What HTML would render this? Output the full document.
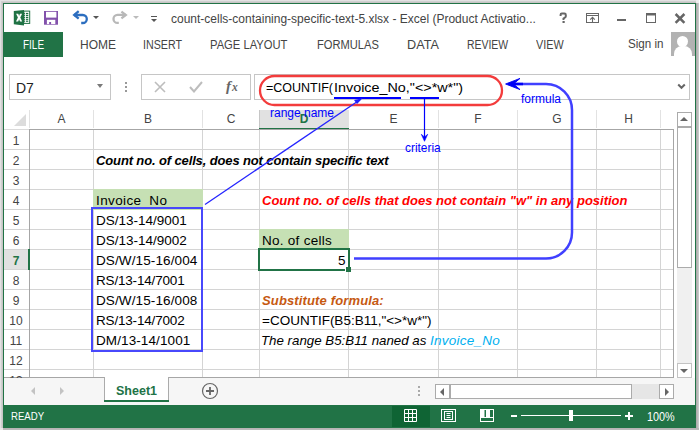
<!DOCTYPE html>
<html><head><meta charset="utf-8">
<style>
*{margin:0;padding:0;box-sizing:border-box}
html,body{width:699px;height:430px;overflow:hidden;background:#fff;font-family:"Liberation Sans",sans-serif}
.a{position:absolute;white-space:nowrap}
#win{position:absolute;left:3px;top:3px;width:693px;height:425px;border:1px solid #217346;background:#fff;box-shadow:none}
.tab{position:absolute;top:39px;font-size:12px;color:#444;line-height:13px;transform-origin:0 0;white-space:nowrap}
.vl{position:absolute;width:1px;background:#d4d4d4}
.hl{position:absolute;height:1px;background:#d4d4d4}
.ch{position:absolute;top:110px;height:18px;font-size:12px;color:#444;text-align:center;line-height:18px}
.rh{position:absolute;left:4px;width:24px;font-size:12px;color:#444;text-align:center;line-height:20px;height:19px;padding-top:1px;overflow:visible}
.c{position:absolute;font-size:13.5px;color:#000;line-height:22px;height:22px;white-space:nowrap}
</style></head><body>
<div class="a" style="left:0;top:0;width:699px;height:1px;background:#e2e2e2"></div>
<div class="a" style="left:0;top:1px;width:699px;height:1px;background:#d0d0d0"></div>
<div class="a" style="left:0;top:2px;width:699px;height:1px;background:#c7c5c5"></div>
<div class="a" style="left:0;top:0;width:1px;height:430px;background:#e2e2e2"></div>
<div class="a" style="left:1px;top:1px;width:1px;height:429px;background:#d0d0d0"></div>
<div class="a" style="left:2px;top:2px;width:1px;height:428px;background:#c7c5c5"></div>
<div class="a" style="left:696px;top:3px;width:1px;height:427px;background:#b0aeae"></div>
<div class="a" style="left:697px;top:3px;width:1px;height:427px;background:#b9b9b9"></div>
<div class="a" style="left:698px;top:3px;width:1px;height:427px;background:#c9c9c9"></div>
<div class="a" style="left:3px;top:428px;width:696px;height:1px;background:#b7b5b5"></div>
<div class="a" style="left:3px;top:429px;width:696px;height:1px;background:#bababa"></div>
<div class="a" style="left:696px;top:0;width:3px;height:3px;background:#eeeeee"></div>
<div class="a" style="left:0;top:428px;width:3px;height:2px;background:#e8e8e8"></div>
<div id="win"></div>

<!-- ===== Title bar ===== -->
<svg class="a" style="left:13px;top:9px" width="19" height="18" viewBox="0 0 19 18">
  <rect x="10.8" y="2.1" width="5.9" height="12.3" fill="#fff" stroke="#1f7244" stroke-width="1"/>
  <g fill="#1f7244"><rect x="12.9" y="3.9" width="2.4" height="1.2"/><rect x="12.9" y="5.8" width="2.4" height="1.2"/><rect x="12.9" y="7.8" width="2.4" height="1.2"/><rect x="12.9" y="9.7" width="2.4" height="1.2"/><rect x="12.9" y="11.6" width="2.4" height="1.2"/>
  <rect x="11" y="3.9" width="0.9" height="1.2"/><rect x="11" y="5.8" width="0.9" height="1.2"/><rect x="11" y="7.8" width="0.9" height="1.2"/><rect x="11" y="9.7" width="0.9" height="1.2"/><rect x="11" y="11.6" width="0.9" height="1.2"/></g>
  <path d="M0.8 2.1 L11 0.9 L11 16.6 L0.8 15.3 Z" fill="#1f7244"/>
  <path d="M3.1 4.7 H5.3 L6.1 6.9 L6.9 4.7 H9.1 L7.3 8.6 L9.2 12.6 H7 L6.1 10.3 L5.2 12.6 H3 L4.9 8.6 Z" fill="#fff"/>
</svg>
<svg class="a" style="left:44px;top:10px" width="14" height="15" viewBox="0 0 14 15">
  <rect x="0" y="1" width="14" height="13.7" fill="#8251ab"/>
  <rect x="2" y="1.8" width="10.4" height="5.8" fill="#fff"/>
  <rect x="2.9" y="9.8" width="8.4" height="4.3" fill="#fff"/>
  <rect x="5.2" y="12" width="1.9" height="2.2" fill="#8251ab"/>
</svg>
<svg class="a" style="left:68px;top:6px" width="24" height="22" viewBox="0 0 24 22">
  <path d="M10.7 5.2 L6.2 9 L10.7 12.6" fill="none" stroke="#2c6ebf" stroke-width="2.3" stroke-linejoin="miter"/>
  <path d="M6 9 H14.8 A4 4 0 0 1 14.8 17 H13.2" fill="none" stroke="#2c6ebf" stroke-width="2.3"/>
</svg>
<div class="a" style="left:93px;top:16px;width:0;height:0;border-left:3px solid transparent;border-right:3px solid transparent;border-top:3px solid #555"></div>
<svg class="a" style="left:108px;top:6px" width="24" height="22" viewBox="0 0 24 22">
  <path d="M13.4 5.6 L17.8 8.9 L13.4 12.3" fill="none" stroke="#b8b8b8" stroke-width="2.3"/>
  <path d="M18 8.9 H9.5 A4 4 0 0 0 9.5 16.9 H10.8" fill="none" stroke="#b8b8b8" stroke-width="2.3"/>
</svg>
<div class="a" style="left:133px;top:16px;width:0;height:0;border-left:3px solid transparent;border-right:3px solid transparent;border-top:3px solid #bbb"></div>
<div class="a" style="left:151px;top:16px;width:6px;height:1px;background:#555"></div>
<div class="a" style="left:151px;top:19px;width:0;height:0;border-left:3px solid transparent;border-right:3px solid transparent;border-top:3px solid #555"></div>
<div class="a" style="left:171px;top:12px;font-size:12px;color:#444;line-height:14px">count-cells-containing-specific-text-5.xlsx - Excel (Product Activatio...</div>

<!-- window controls -->
<svg class="a" style="left:559px;top:12px" width="9" height="12" viewBox="0 0 9 12">
  <path d="M1.6 4 V2.8 Q1.6 1.6 2.8 1.6 H5.4 Q6.8 1.6 6.8 3 V4.2 Q6.8 5 6 5.5 L4.5 6.6 V8" fill="none" stroke="#666" stroke-width="2"/>
  <rect x="3.5" y="9" width="2.2" height="2" fill="#666"/>
</svg>
<svg class="a" style="left:585px;top:12px" width="15" height="12" viewBox="0 0 15 12">
  <rect x="1.5" y="1.5" width="12" height="9" fill="none" stroke="#666" stroke-width="1"/>
  <path d="M1.5 3.5 H13.5" stroke="#666" stroke-width="1"/>
  <path d="M5.2 7.6 L7.5 5.4 L9.8 7.6" fill="none" stroke="#666" stroke-width="1.2"/>
  <path d="M7.5 5.8 V10.5" stroke="#666" stroke-width="1.1"/>
</svg>
<div class="a" style="left:617px;top:19px;width:9px;height:2px;background:#666"></div>
<svg class="a" style="left:646px;top:13px" width="11" height="10" viewBox="0 0 11 10">
  <rect x="0.5" y="0.5" width="9" height="9" fill="none" stroke="#666"/>
  <rect x="0" y="0" width="10" height="2.5" fill="#666"/>
</svg>
<svg class="a" style="left:674px;top:13px" width="12" height="11" viewBox="0 0 12 11">
  <path d="M1.6 1 L10.4 9.8 M10.4 1 L1.6 9.8" stroke="#666" stroke-width="2.5"/>
</svg>

<!-- ===== Ribbon tabs ===== -->
<div class="a" style="left:3px;top:32px;width:60px;height:25px;background:#217346"></div>
<div class="tab" style="left:23px;color:#fff;transform:scaleX(0.83)">FILE</div>
<div class="tab" style="left:80px;transform:scaleX(1.0)">HOME</div>
<div class="tab" style="left:143px;transform:scaleX(0.891)">INSERT</div>
<div class="tab" style="left:210px;transform:scaleX(0.934)">PAGE LAYOUT</div>
<div class="tab" style="left:317px;transform:scaleX(0.928)">FORMULAS</div>
<div class="tab" style="left:407px;transform:scaleX(1.054)">DATA</div>
<div class="tab" style="left:467px;transform:scaleX(0.869)">REVIEW</div>
<div class="tab" style="left:536px;transform:scaleX(0.90)">VIEW</div>
<div class="tab" style="left:628px;font-size:12.5px;top:38px;transform:scaleX(0.93)">Sign in</div>
<div class="a" style="left:671px;top:32px;width:24px;height:24px;background:#b2b2b2;overflow:hidden">
  <div class="a" style="left:6px;top:4px;width:11px;height:11px;border-radius:50%;background:#fff"></div>
  <div class="a" style="left:3px;top:14px;width:18px;height:14px;border-radius:8px 8px 0 0;background:#fff"></div>
</div>

<!-- ===== Formula bar ===== -->
<div class="a" style="left:9px;top:74px;width:102px;height:26px;border:1px solid #c6c6c6;background:#fff"></div>
<div class="a" style="left:16px;top:80px;font-size:14px;color:#222;line-height:16px">D7</div>
<div class="a" style="left:97px;top:84px;width:0;height:0;border-left:3.5px solid transparent;border-right:3.5px solid transparent;border-top:4px solid #7a7a7a"></div>
<div class="a" style="left:125px;top:82px;width:2px;height:2px;background:#999"></div>
<div class="a" style="left:125px;top:86px;width:2px;height:2px;background:#999"></div>
<div class="a" style="left:125px;top:90px;width:2px;height:2px;background:#999"></div>
<div class="a" style="left:141px;top:74px;width:110px;height:26px;border:1px solid #c6c6c6;background:#fff"></div>
<svg class="a" style="left:154px;top:81px" width="12" height="12" viewBox="0 0 12 12"><path d="M1 1 L11 11 M11 1 L1 11" stroke="#bdbdbd" stroke-width="1.6"/></svg>
<svg class="a" style="left:189px;top:81px" width="14" height="12" viewBox="0 0 14 12"><path d="M1 6 L5 10.5 L13 1" fill="none" stroke="#bdbdbd" stroke-width="2"/></svg>
<div class="a" style="left:226px;top:78px;font-family:'Liberation Serif';font-style:italic;font-weight:bold;font-size:15px;color:#666;line-height:16px">f<span style="font-size:11.5px;margin-left:1px">x</span></div>
<div class="a" style="left:254px;top:74px;width:436px;height:26px;border:1px solid #c6c6c6;background:#fff"></div>
<svg class="a" style="left:677px;top:83px" width="9" height="7" viewBox="0 0 9 7"><path d="M1.2 1.5 L4.5 4.8 L7.8 1.5" fill="none" stroke="#666" stroke-width="2"/></svg>
<div class="a" style="left:266px;top:79px;font-size:13px;color:#000;line-height:17px;transform:scaleX(0.961);transform-origin:0 0">=COUNTIF(</div>
<div class="a" style="left:333.5px;top:79px;font-size:13px;color:#000;line-height:17px;transform:scaleX(1.104);transform-origin:0 0">Invoice_No,"&lt;&gt;*w*")</div>

<!-- ===== Grid ===== -->
<!-- header row -->
<div class="a" style="left:259px;top:110px;width:89px;height:18px;background:#e1e1e1"></div>
<div class="a" style="left:259px;top:128px;width:90px;height:2px;background:#217346"></div>
<svg class="a" style="left:14px;top:114px" width="12" height="12"><path d="M12 0 L12 12 L0 12 Z" fill="#dcdcdc"/></svg>
<div class="ch" style="left:30px;width:63px">A</div>
<div class="ch" style="left:94px;width:108px">B</div>
<div class="ch" style="left:203px;width:56px">C</div>
<div class="ch" style="left:260px;width:88px;color:#217346;font-weight:bold">D</div>
<div class="ch" style="left:349px;width:89px">E</div>
<div class="ch" style="left:439px;width:78px">F</div>
<div class="ch" style="left:518px;width:78px">G</div>
<div class="ch" style="left:597px;width:63px">H</div>
<!-- header separators -->
<div class="vl" style="left:29px;top:110px;height:18px;background:#e2e2e2"></div>
<div class="vl" style="left:93px;top:110px;height:18px;background:#e2e2e2"></div>
<div class="vl" style="left:202px;top:110px;height:18px;background:#e2e2e2"></div>
<div class="vl" style="left:259px;top:110px;height:18px;background:#c6c6c6"></div>
<div class="vl" style="left:348px;top:110px;height:18px;background:#e2e2e2"></div>
<div class="vl" style="left:438px;top:110px;height:18px;background:#e2e2e2"></div>
<div class="vl" style="left:517px;top:110px;height:18px;background:#e2e2e2"></div>
<div class="vl" style="left:596px;top:110px;height:18px;background:#e2e2e2"></div>
<div class="vl" style="left:660px;top:110px;height:18px;background:#e2e2e2"></div>
<div class="hl" style="left:29px;top:129px;width:645px;background:#a6a6a6"></div>
<div class="hl" style="left:4px;top:129px;width:25px;background:#dadada"></div>

<!-- grid lines -->
<div class="vl" style="left:93px;top:130px;height:247px"></div>
<div class="vl" style="left:202px;top:130px;height:247px"></div>
<div class="vl" style="left:259px;top:130px;height:247px"></div>
<div class="vl" style="left:348px;top:130px;height:247px"></div>
<div class="vl" style="left:438px;top:130px;height:247px"></div>
<div class="vl" style="left:517px;top:130px;height:247px"></div>
<div class="vl" style="left:596px;top:130px;height:247px"></div>
<div class="vl" style="left:660px;top:130px;height:247px"></div>
<div class="hl" style="left:4px;top:149px;width:669px"></div>
<div class="hl" style="left:4px;top:169px;width:669px"></div>
<div class="hl" style="left:4px;top:189px;width:669px"></div>
<div class="hl" style="left:4px;top:209px;width:669px"></div>
<div class="hl" style="left:4px;top:229px;width:669px"></div>
<div class="hl" style="left:4px;top:249px;width:669px"></div>
<div class="hl" style="left:4px;top:269px;width:669px"></div>
<div class="hl" style="left:4px;top:289px;width:669px"></div>
<div class="hl" style="left:4px;top:309px;width:669px"></div>
<div class="hl" style="left:4px;top:329px;width:669px"></div>
<div class="hl" style="left:4px;top:349px;width:669px"></div>
<div class="hl" style="left:4px;top:369px;width:669px"></div>

<div class="vl" style="left:29px;top:129px;height:248px;background:#a6a6a6"></div>
<div class="vl" style="left:673px;top:129px;height:248px;background:#a6a6a6"></div>
<div class="hl" style="left:4px;top:377px;width:670px;background:#a6a6a6"></div>

<!-- row headers -->
<div class="rh" style="top:130px">1</div>
<div class="rh" style="top:150px">2</div>
<div class="rh" style="top:170px">3</div>
<div class="rh" style="top:190px">4</div>
<div class="rh" style="top:210px">5</div>
<div class="rh" style="top:230px">6</div>
<div class="rh" style="top:250px;background:#e1e1e1;color:#217346;font-weight:bold">7</div>
<div class="a" style="left:28px;top:249px;width:2px;height:21px;background:#217346"></div>
<div class="rh" style="top:270px">8</div>
<div class="rh" style="top:290px">9</div>
<div class="rh" style="top:310px">10</div>
<div class="rh" style="top:330px">11</div>
<div class="rh" style="top:350px">12</div>
<div class="rh" style="top:370px">13</div>

<!-- cell fills -->
<div class="a" style="left:93px;top:189px;width:110px;height:21px;background:#c6e0b4"></div>
<div class="a" style="left:259px;top:229px;width:90px;height:20px;background:#c6e0b4"></div>

<!-- cells -->
<div class="c" style="left:96px;top:150px;font-weight:bold;font-style:italic;font-size:13px;letter-spacing:-0.13px">Count no. of cells, does not contain specific text</div>
<div class="c" style="left:96px;top:190px;letter-spacing:0.38px">Invoice_No</div>
<div class="c" style="left:96px;top:210px">DS/13-14/9001</div>
<div class="c" style="left:96px;top:230px">DS/13-14/9002</div>
<div class="c" style="left:96px;top:250px;letter-spacing:0.12px">DS/W/15-16/004</div>
<div class="c" style="left:96px;top:270px;letter-spacing:-0.18px">RS/13-14/7001</div>
<div class="c" style="left:96px;top:290px;letter-spacing:0.12px">DS/W/15-16/008</div>
<div class="c" style="left:96px;top:310px;letter-spacing:-0.18px">RS/13-14/7002</div>
<div class="c" style="left:96px;top:330px;letter-spacing:0.1px">DM/13-14/1001</div>
<div class="c" style="left:262px;top:190px;font-weight:bold;font-style:italic;color:#f00;font-size:13px">Count no. of cells that does not contain "w" in any position</div>
<div class="c" style="left:262px;top:230px;letter-spacing:0.27px">No. of cells</div>
<div class="c" style="left:338px;top:250px">5</div>
<div class="c" style="left:262px;top:290px;font-weight:bold;font-style:italic;color:#c65911;font-size:13px;letter-spacing:0.14px">Substitute formula:</div>
<div class="c" style="left:262px;top:310px">=COUNTIF(B5:B11,"&lt;&gt;*w*")</div>
<div class="c" style="left:261px;top:330px;font-style:italic;font-size:13.3px">The range B5:B11 naned as</div>
<div class="c" style="left:430px;top:330px;font-style:italic;color:#00b0f0;font-size:13.5px;letter-spacing:0.25px">Invoice_No</div>

<!-- active cell -->
<div class="a" style="left:258px;top:248px;width:92px;height:23px;border:2px solid #217346"></div>
<div class="a" style="left:345px;top:267px;width:6px;height:5px;background:#217346;border-left:1px solid #fff"></div>

<!-- blue range rect -->
<div class="a" style="left:91px;top:207px;width:112px;height:145px;border:2px solid #4848fc"></div>

<!-- vertical scrollbar -->
<div class="a" style="left:677px;top:268px;width:15px;height:96px;background:#f0f0f0"></div>
<div class="a" style="left:677px;top:112px;width:15px;height:15px;border:1px solid #ababab;background:#fff"></div>
<div class="a" style="left:680px;top:117px;width:0;height:0;border-left:4px solid transparent;border-right:4px solid transparent;border-bottom:4px solid #666"></div>
<div class="a" style="left:677px;top:127px;width:15px;height:141px;border:1px solid #ababab;background:#fff"></div>
<div class="a" style="left:674px;top:363px;width:21px;height:22px;background:#fff"></div>
<div class="a" style="left:677px;top:363px;width:15px;height:15px;border:1px solid #c3c3c3;background:#fff"></div>
<div class="a" style="left:680px;top:369px;width:0;height:0;border-left:4px solid transparent;border-right:4px solid transparent;border-top:4px solid #666"></div>

<!-- sheet tabs bar -->
<div class="a" style="left:4px;top:378px;width:691px;height:27px;background:#f6f6f6"></div>
<div class="a" style="left:31px;top:387px;width:0;height:0;border-top:4px solid transparent;border-bottom:4px solid transparent;border-right:4px solid #c3c3c3"></div>
<div class="a" style="left:60px;top:387px;width:0;height:0;border-top:4px solid transparent;border-bottom:4px solid transparent;border-left:4px solid #c3c3c3"></div>
<div class="a" style="left:104px;top:377px;width:65px;height:24px;background:#fff;border-left:1px solid #ababab;border-right:1px solid #ababab"></div>
<div class="a" style="left:104px;top:400px;width:65px;height:2px;background:#217346"></div>
<div class="a" style="left:116px;top:383px;font-size:12.5px;font-weight:bold;color:#217346;line-height:16px">Sheet1</div>
<svg class="a" style="left:201px;top:382px" width="18" height="18" viewBox="0 0 18 18">
  <circle cx="9" cy="9" r="7.5" fill="none" stroke="#666" stroke-width="1.2"/>
  <path d="M9 5 V13 M5 9 H13" stroke="#666" stroke-width="1.8"/>
</svg>
<div class="a" style="left:418px;top:386px;width:2px;height:2px;background:#aaa"></div>
<div class="a" style="left:418px;top:390px;width:2px;height:2px;background:#aaa"></div>
<div class="a" style="left:418px;top:394px;width:2px;height:2px;background:#aaa"></div>
<div class="a" style="left:435px;top:384px;width:239px;height:15px;background:#e6e6e6"></div>
<div class="a" style="left:435px;top:384px;width:15px;height:15px;border:1px solid #ababab;background:#fff"></div>
<div class="a" style="left:440px;top:388px;width:0;height:0;border-top:4px solid transparent;border-bottom:4px solid transparent;border-right:4px solid #666"></div>
<div class="a" style="left:450px;top:384px;width:182px;height:15px;border:1px solid #ababab;background:#fff"></div>
<div class="a" style="left:659px;top:384px;width:15px;height:15px;border:1px solid #ababab;background:#fff"></div>
<div class="a" style="left:665px;top:388px;width:0;height:0;border-top:4px solid transparent;border-bottom:4px solid transparent;border-left:4px solid #666"></div>

<!-- status bar -->
<div class="a" style="left:3px;top:405px;width:693px;height:23px;background:#217346"></div>
<div class="a" style="left:11px;top:410px;font-size:10.7px;color:#fff;line-height:12px;transform:scaleX(0.9);transform-origin:0 0">READY</div>
<div class="a" style="left:392px;top:406px;width:38px;height:21px;background:#0f6434"></div>
<svg class="a" style="left:404px;top:409px" width="13" height="13" viewBox="0 0 13 13"><path d="M0.5 0.5 H12.5 V12.5 H0.5 Z M4.5 0.5 V12.5 M8.5 0.5 V12.5 M0.5 4.5 H12.5 M0.5 8.5 H12.5" fill="none" stroke="#fff"/></svg>
<svg class="a" style="left:441px;top:409px" width="15" height="13" viewBox="0 0 15 13"><rect x="0.5" y="0.5" width="14" height="12" fill="none" stroke="#fff"/><rect x="3.5" y="2.5" width="8" height="8" fill="none" stroke="#fff"/><path d="M5.5 4.5 H9.5 M5.5 6.5 H9.5 M5.5 8.5 H9.5" stroke="#fff"/></svg>
<svg class="a" style="left:480px;top:409px" width="14" height="13" viewBox="0 0 14 13"><rect x="0.5" y="0.5" width="13" height="12" fill="none" stroke="#fff"/><rect x="0.5" y="0.5" width="4" height="8" fill="#fff"/><rect x="6" y="0.5" width="4" height="8" fill="#fff"/><path d="M0.5 8.5 H13.5" stroke="#fff"/></svg>
<div class="a" style="left:511px;top:415px;width:6px;height:2px;background:#fff"></div>
<div class="a" style="left:521px;top:415px;width:100px;height:1px;background:#fff"></div>
<div class="a" style="left:569px;top:410px;width:4px;height:11px;background:#fff"></div>
<div class="a" style="left:625px;top:415px;width:8px;height:2px;background:#fff"></div>
<div class="a" style="left:628px;top:412px;width:2px;height:8px;background:#fff"></div>
<div class="a" style="left:647px;top:411px;font-size:12px;color:#fff;line-height:12px;transform:scaleX(0.9);transform-origin:0 0">100%</div>

<!-- ===== annotations ===== -->
<svg class="a" style="left:0;top:0" width="699" height="430">
  <rect x="260" y="76" width="242" height="29" rx="14.5" ry="14.5" fill="none" stroke="#f33c3c" stroke-width="2.3"/>
  <line x1="334" y1="98" x2="401" y2="98" stroke="#0000ff" stroke-width="2"/>
  <line x1="410" y1="98" x2="439" y2="98" stroke="#0000ff" stroke-width="2"/>
  <line x1="424.5" y1="98" x2="424.5" y2="138" stroke="#0000ff" stroke-width="1.2"/>
  <path d="M421.3 134.3 L424.5 141.3 L427.7 134.3 L424.5 137 Z" fill="#0000ff" stroke="#0000ff" stroke-width="0.6" stroke-linejoin="round"/>
  <line x1="205" y1="204.5" x2="360" y2="99.7" stroke="#2424ff" stroke-width="1.3"/>
  <path d="M362.5 98.3 L354 100 L357 104 Z" fill="#2020ff"/>
  <path d="M354 258.5 H546 A26 26 0 0 0 572 232.5 V110 A26 26 0 0 0 546 84 H512" fill="none" stroke="#4040ff" stroke-width="2.5"/>
  <path d="M505.6 84 L520 78.4 L513.5 84 L520 89.6 Z" fill="#0000f5" stroke="#0000f5" stroke-width="0.9" stroke-linejoin="round"/><path d="M512 84 H523" stroke="#0000f5" stroke-width="2.5"/>
</svg>
<div class="a" style="left:270px;top:107px;font-size:12px;color:#0000ff;line-height:13px">range name</div>
<div class="a" style="left:405px;top:141px;font-size:11.9px;color:#0000ff;line-height:14px">criteria</div>
<div class="a" style="left:521px;top:92px;font-size:12px;color:#0000ff;line-height:14px">formula</div>
</body></html>
